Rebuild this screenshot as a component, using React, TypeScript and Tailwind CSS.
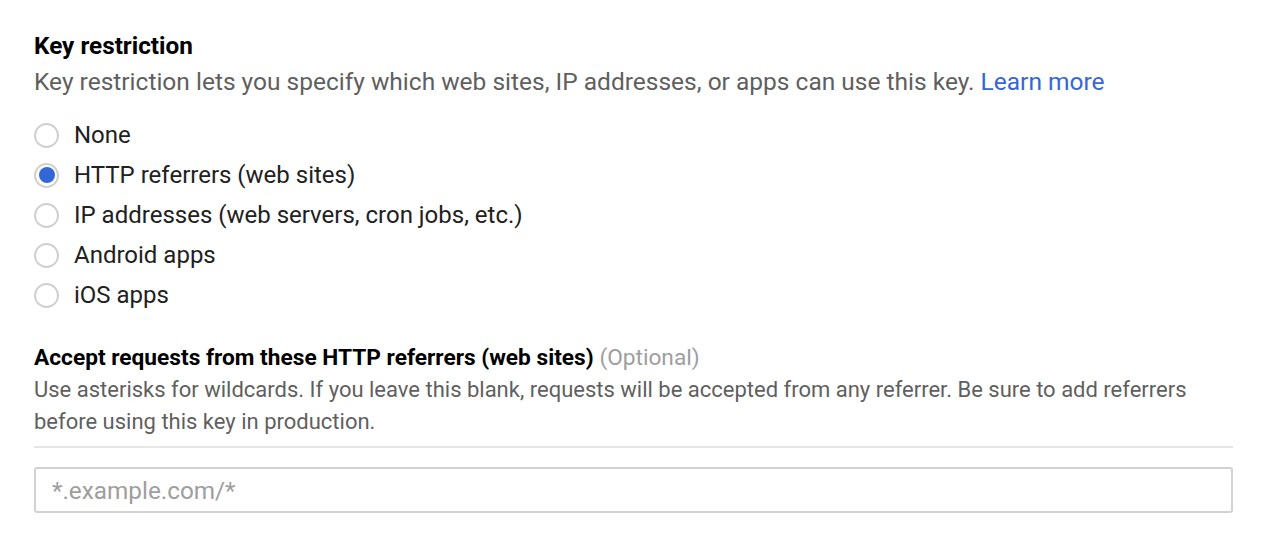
const OPTIONS = [
  "None",
  "HTTP referrers (web sites)",
  "IP addresses (web servers, cron jobs, etc.)",
  "Android apps",
  "iOS apps",
];

function Radio({ checked }: { checked: boolean }) {
  return (
    <span className="flex h-[25px] w-[25px] shrink-0 items-center justify-center rounded-full border-2 border-[#d0d0d0] bg-white">
      {checked && <span className="h-[16px] w-[16px] rounded-full bg-[#3367d6]" />}
    </span>
  );
}

export default function App() {
  const selected = 1;
  return (
    <div className="min-h-[560px] w-[1282px] bg-white pl-[34px] pr-[48px] pt-[30px] font-['Roboto',sans-serif] antialiased">
      {/* Key restriction */}
      <h2 className="text-[24.3px] font-bold leading-[32px] text-black">Key restriction</h2>
      <p className="text-[24.5px] leading-[40px] text-[#5f5f5f]">
        Key restriction lets you specify which web sites, IP addresses, or apps can use this key.{" "}
        <a className="text-[#3367d6]" href="#">Learn more</a>
      </p>

      <div className="mt-[13px] flex flex-col">
        {OPTIONS.map((o, i) => (
          <label key={o} className="flex h-[40px] items-center gap-[15px]">
            <Radio checked={i === selected} />
            <span className="text-[24px] text-[#212121]">{o}</span>
          </label>
        ))}
      </div>

      {/* HTTP referrers */}
      <div className="mt-[27px] w-[1199px]">
        <div className="text-[22.7px] font-bold leading-[32px] text-black">
          Accept requests from these HTTP referrers (web sites){" "}
          <span className="font-normal text-[#9e9e9e]">(Optional)</span>
        </div>
        <p className="text-[22px] leading-[32px] text-[#5f5f5f]">
          Use asterisks for wildcards. If you leave this blank, requests will be accepted from any referrer. Be sure to add referrers before using this key in production.
        </p>
        <div className="mt-[8px] border-t-2 border-[#e6e6e6]" />
        <input
          className="mt-[19px] h-[46px] w-full rounded-[3px] border-2 border-[#d2d2d2] px-[16px] text-[24.3px] text-[#212121] outline-none placeholder:text-[#9e9e9e]"
          placeholder="*.example.com/*"
        />
      </div>
    </div>
  );
}
